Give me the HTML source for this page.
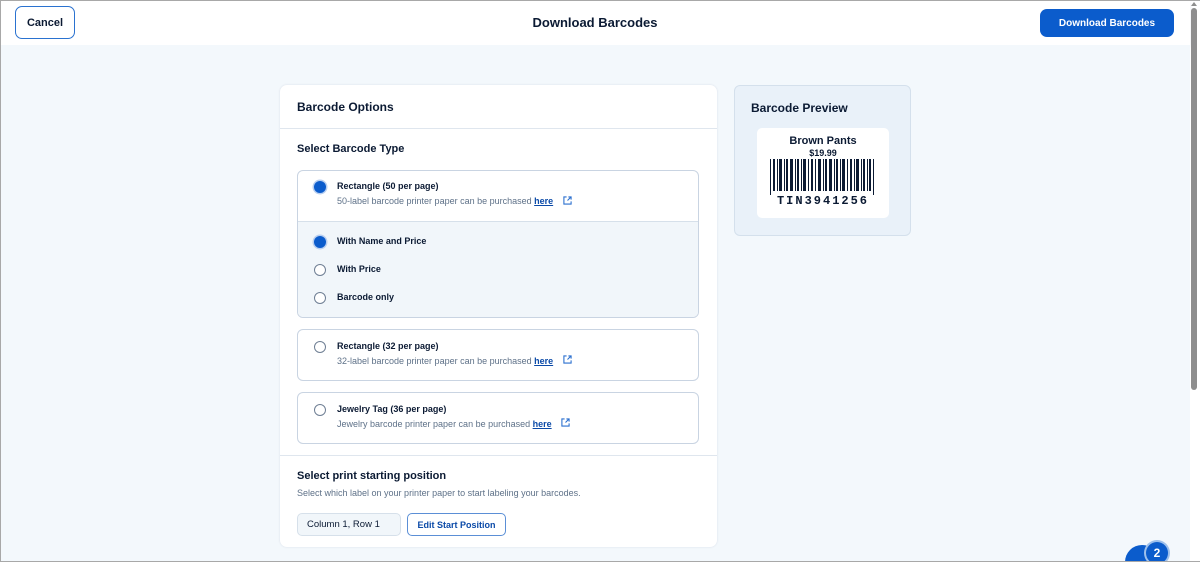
<!DOCTYPE html>
<html style="width:1200px;height:562px;overflow:hidden"><head><style>
*{box-sizing:border-box;margin:0;padding:0}
body{width:1200px;height:562px;overflow:hidden;background:#fff;font-family:"Liberation Sans",sans-serif;color:#0b1a33;position:relative}
.frame{position:absolute;left:0;top:0;width:1200px;height:562px;border:1px solid #a8a8a8;border-right:none;pointer-events:none}
.main{position:absolute;left:1px;top:45px;width:1189px;height:516px;background:#f3f8fc}
.hdr{position:absolute;left:1px;top:1px;width:1189px;height:44px;background:#fff;box-shadow:0 2px 4px rgba(0,40,90,.08)}
.btn{position:absolute;font-weight:bold;font-size:11px;display:flex;align-items:center;justify-content:center;border-radius:7px}
.sb{position:absolute;left:1191px;top:8px;width:6px;height:382px;background:#8e8e8e;border-radius:3px}
.card{position:absolute;left:280px;top:85px;width:437px;height:462px;background:#fff;border-radius:7px;box-shadow:0 0 2px rgba(0,30,80,.12)}
.abs{position:absolute}
.h{font-weight:bold;font-size:12px}
.box{position:absolute;left:17px;width:402px;border:1px solid #c9d4e2;border-radius:6px;background:#fff;overflow:hidden}
.r{position:absolute;width:12px;height:12px;border-radius:50%;border:1.3px solid #6f7f94;background:#fff}
.r.on{border:none;background:#0b5ccc;box-shadow:0 0 0 1.5px #b9cff0}
.t{position:absolute;font-size:9px;font-weight:bold}
.s{position:absolute;font-size:9px;color:#5e7188}
.s a{color:#0b4aa8;font-weight:bold;text-decoration:underline}
.ext{position:absolute;width:9px;height:9px}
.clip{position:absolute;left:0;top:0;width:1200px;height:562px;overflow:hidden}
</style></head><body><div class="clip">
<div class="hdr"></div>
<div class="main"></div>
<div class="btn" style="left:15px;top:6px;width:60px;height:33px;border:1.5px solid #2a72d0;background:#fff;color:#0b1a33">Cancel</div>
<div class="abs" style="left:0;width:1190px;top:15px;text-align:center;font-weight:bold;font-size:13px">Download Barcodes</div>
<div class="btn" style="left:1040px;top:9px;width:134px;height:28px;background:#0b5ccc;color:#fff;font-size:10px">Download Barcodes</div>
<div class="sb"></div>
<div class="abs" style="left:1191px;top:2px;width:0;height:0;border-left:3px solid transparent;border-right:3px solid transparent;border-bottom:4px solid #8e8e8e"></div>

<div class="card">
 <div class="abs h" style="left:17px;top:15px">Barcode Options</div>
 <div class="abs" style="left:0;top:43px;width:437px;height:1px;background:#dfe6ee"></div>
 <div class="abs h" style="left:17px;top:58px;font-size:11px">Select Barcode Type</div>
 <div class="box" style="top:85px;height:148px">
  <div class="abs" style="left:0;top:50px;width:402px;height:98px;background:#f1f6fa;border-top:1px solid #d6e0ea"></div>
  <div class="r on" style="left:16px;top:10px"></div>
  <div class="t" style="left:39px;top:10px">Rectangle (50 per page)</div>
  <div class="s" style="left:39px;top:25px">50-label barcode printer paper can be purchased <a>here</a></div>
  <svg class="ext" style="left:265px;top:25px" viewBox="0 0 10 10" fill="none" stroke="#2a6fcf" stroke-width="1.2"><path d="M4 1H1v8h8V6M6 1h3v3M9 1L5 5"/></svg>
  <div class="r on" style="left:16px;top:65px"></div>
  <div class="t" style="left:39px;top:65px">With Name and Price</div>
  <div class="r" style="left:16px;top:93px"></div>
  <div class="t" style="left:39px;top:93px">With Price</div>
  <div class="r" style="left:16px;top:121px"></div>
  <div class="t" style="left:39px;top:121px">Barcode only</div>
 </div>
 <div class="box" style="top:244px;height:52px">
  <div class="r" style="left:16px;top:11px"></div>
  <div class="t" style="left:39px;top:11px">Rectangle (32 per page)</div>
  <div class="s" style="left:39px;top:26px">32-label barcode printer paper can be purchased <a>here</a></div>
  <svg class="ext" style="left:265px;top:25px" viewBox="0 0 10 10" fill="none" stroke="#2a6fcf" stroke-width="1.2"><path d="M4 1H1v8h8V6M6 1h3v3M9 1L5 5"/></svg>
 </div>
 <div class="box" style="top:307px;height:52px">
  <div class="r" style="left:16px;top:11px"></div>
  <div class="t" style="left:39px;top:11px">Jewelry Tag (36 per page)</div>
  <div class="s" style="left:39px;top:26px">Jewelry barcode printer paper can be purchased <a>here</a></div>
  <svg class="ext" style="left:263px;top:25px" viewBox="0 0 10 10" fill="none" stroke="#2a6fcf" stroke-width="1.2"><path d="M4 1H1v8h8V6M6 1h3v3M9 1L5 5"/></svg>
 </div>
 <div class="abs" style="left:0;top:370px;width:437px;height:1px;background:#dfe6ee"></div>
 <div class="abs h" style="left:17px;top:385px;font-size:11px">Select print starting position</div>
 <div class="s" style="left:17px;top:403px">Select which label on your printer paper to start labeling your barcodes.</div>
 <div class="abs" style="left:17px;top:428px;width:104px;height:23px;background:#f1f6fa;border:1px solid #d6e0ea;border-radius:5px;font-size:9.5px;padding:5px 0 0 9px">Column 1, Row 1</div>
 <div class="btn" style="left:127px;top:428px;width:99px;height:23px;border:1.3px solid #5b8fd6;color:#0b4aa8;font-size:9px;border-radius:5px">Edit Start Position</div>
</div>

<div class="abs" style="left:734px;top:85px;width:177px;height:151px;background:#e9f1f9;border:1px solid #d4e0ec;border-radius:6px">
 <div class="abs h" style="left:16px;top:15px">Barcode Preview</div>
 <div class="abs" style="left:22px;top:42px;width:132px;height:90px;background:#fff;border-radius:5px;text-align:center">
  <div style="font-weight:bold;font-size:11px;margin-top:7px">Brown Pants</div>
  <div style="font-weight:bold;font-size:9px;margin-top:1px">$19.99</div>
  <svg width="110" height="48" viewBox="0 0 110 48" style="display:block;margin:1px auto 0">
   <g fill="#0b1a33">
   <rect x="2" y="0" width="1" height="36"/><rect x="5" y="0" width="2" height="32"/><rect x="9" y="0" width="1" height="32"/><rect x="11" y="0" width="3" height="32"/><rect x="16" y="0" width="1" height="32"/><rect x="18" y="0" width="2" height="32"/><rect x="22" y="0" width="3" height="32"/><rect x="27" y="0" width="1" height="32"/><rect x="29" y="0" width="2" height="32"/><rect x="33" y="0" width="1" height="32"/><rect x="35" y="0" width="3" height="32"/><rect x="40" y="0" width="1" height="32"/><rect x="43" y="0" width="2" height="32"/><rect x="47" y="0" width="1" height="32"/><rect x="50" y="0" width="3" height="32"/><rect x="55" y="0" width="1" height="32"/><rect x="57" y="0" width="2" height="32"/><rect x="61" y="0" width="3" height="32"/><rect x="66" y="0" width="1" height="32"/><rect x="68" y="0" width="2" height="32"/><rect x="72" y="0" width="1" height="32"/><rect x="74" y="0" width="3" height="32"/><rect x="79" y="0" width="1" height="32"/><rect x="82" y="0" width="2" height="32"/><rect x="86" y="0" width="1" height="32"/><rect x="88" y="0" width="3" height="32"/><rect x="93" y="0" width="1" height="32"/><rect x="95" y="0" width="2" height="32"/><rect x="99" y="0" width="1" height="32"/><rect x="101" y="0" width="2" height="32"/><rect x="105" y="0" width="1" height="36"/>
   <text x="55" y="45" text-anchor="middle" font-family="Liberation Mono,monospace" font-weight="bold" font-size="12" letter-spacing="2">TIN3941256</text>
   </g>
  </svg>
 </div>
</div>

<div class="abs" style="left:1125px;top:545px;width:34px;height:34px;border-radius:50%;background:#0b5ccc"></div>
<div class="abs" style="left:1146px;top:542px;width:22px;height:22px;border-radius:50%;background:#0b5ccc;box-shadow:0 0 0 2px #9dc0ec;color:#fff;font-size:12px;font-weight:bold;text-align:center;line-height:22px">2</div>
<div class="frame"></div>
</div></body></html>
